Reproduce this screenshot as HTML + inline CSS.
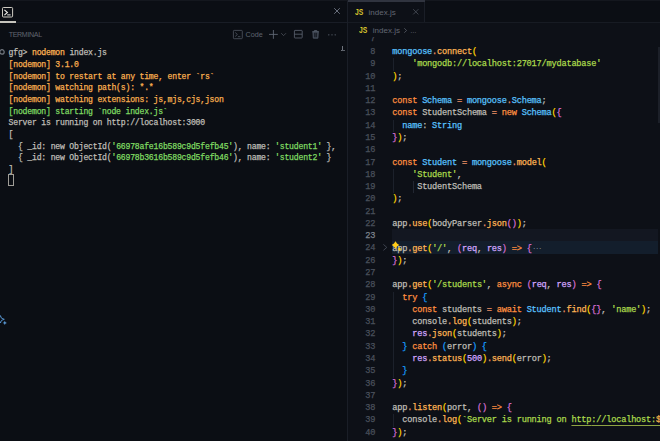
<!DOCTYPE html>
<html lang="en"><head><meta charset="utf-8"><title>index.js - Visual Studio Code</title>
<style>
html,body{margin:0;padding:0;background:#0b0e14;}
body{width:660px;height:441px;overflow:hidden;position:relative;font-family:"Liberation Sans",sans-serif;}
#app{position:absolute;left:0;top:0;width:660px;height:441px;overflow:hidden;background:#0b0e14;}
.abs{position:absolute;}
.mono{font-family:"Liberation Mono","DejaVu Sans Mono",monospace;white-space:pre;-webkit-text-stroke:0.25px currentColor;}
.tl{position:absolute;left:8.6px;height:11.65px;line-height:11.65px;font-size:8.15px;letter-spacing:-0.2008px;color:#bfbdb6;}
.el{position:absolute;left:392.3px;height:12.28px;line-height:12.28px;font-size:8.65px;letter-spacing:-0.2009px;color:#bfbdb6;}
.ln{position:absolute;left:355px;width:20.3px;text-align:right;height:12.28px;line-height:12.28px;font-size:8.65px;letter-spacing:-0.2009px;color:#4a505c;}
.ui{font-family:"Liberation Sans",sans-serif;white-space:pre;}
svg{position:absolute;overflow:visible;}
</style></head><body><div id="app">

<div class="abs" style="left:0;top:0;width:660px;height:1.2px;background:#14171e"></div>
<div class="abs" style="left:0;top:21.8px;width:347.4px;height:1.2px;background:#191d26"></div>
<div class="abs" style="left:0;top:21.3px;width:16.3px;height:1.6px;background:#c6c4bd"></div>
<!-- view icon: terminal -->
<svg style="left:2.1px;top:6.7px" width="11.1" height="10.5" viewBox="0 0 11.1 10.5"><rect x="0.5" y="0.5" width="10.1" height="9.5" rx="0.9" fill="none" stroke="#e4e1d6" stroke-width="0.9"/><path d="M2.4 2.9 L5.4 5.5 L2.4 8.1" fill="none" stroke="#eeeeea" stroke-width="1.15"/><path d="M5.2 7.9 H8.6" stroke="#eeeeea" stroke-width="1"/></svg>
<!-- close X -->
<svg style="left:334px;top:8.2px" width="6" height="6" viewBox="0 0 6 6"><path d="M0.2 0.2 L5.8 5.8 M5.8 0.2 L0.2 5.8" stroke="#7f8795" stroke-width="0.8" fill="none"/></svg>
<div class="abs ui" style="left:8.7px;top:29.6px;font-size:7.1px;line-height:10px;color:#60656f;letter-spacing:-0.35px">TERMINAL</div>
<!-- toolbar -->
<svg style="left:232.6px;top:30.2px" width="9.7" height="9.1" viewBox="0 0 9.7 9.1"><rect x="0.4" y="0.4" width="8.9" height="8.3" rx="0.8" fill="none" stroke="#515762" stroke-width="0.8"/><path d="M2.2 2.5 L4.4 4.5 L2.2 6.5" fill="none" stroke="#515762" stroke-width="0.8"/><path d="M4.9 6.7 H7.4" stroke="#515762" stroke-width="0.8"/></svg>
<div class="abs ui" style="left:245.5px;top:29.6px;font-size:7.2px;line-height:10px;color:#5d6470">Code</div>
<svg style="left:268.6px;top:30px" width="8.8" height="8.8" viewBox="0 0 8.8 8.8"><path d="M4.4 0 V8.8 M0 4.4 H8.8" stroke="#5f6673" stroke-width="0.9" fill="none"/></svg>
<svg style="left:281.4px;top:32.6px" width="5.2" height="3" viewBox="0 0 5.2 3"><path d="M0.2 0.2 L2.6 2.6 L5 0.2" stroke="#565b66" stroke-width="0.7" fill="none"/></svg>
<svg style="left:294.4px;top:30.2px" width="8.6" height="8.4" viewBox="0 0 8.6 8.4"><rect x="0.4" y="0.4" width="7.8" height="7.6" rx="0.6" fill="none" stroke="#5f6673" stroke-width="0.8"/><path d="M0.4 4.2 H8.2" stroke="#5f6673" stroke-width="0.8"/></svg>
<svg style="left:311.8px;top:30px" width="7.2" height="8.6" viewBox="0 0 7.2 8.6"><path d="M0.2 1.7 H7 M2.4 1.5 V0.5 H4.8 V1.5" stroke="#5a6270" stroke-width="0.8" fill="none"/><path d="M0.9 1.9 L1.3 8.2 H5.9 L6.3 1.9 Z" fill="#2f3540" stroke="#5a6270" stroke-width="0.7"/><path d="M2.8 3 V7 M4.4 3 V7" stroke="#0b0e14" stroke-width="0.6"/></svg>
<svg style="left:328.3px;top:33.6px" width="8" height="1.6" viewBox="0 0 8 1.6"><circle cx="0.8" cy="0.8" r="0.65" fill="#5f6673"/><circle cx="4" cy="0.8" r="0.65" fill="#5f6673"/><circle cx="7.2" cy="0.8" r="0.65" fill="#5f6673"/></svg>
<!-- small marks -->
<div class="abs" style="left:341.5px;top:46.2px;width:1px;height:3.6px;background:#8a8f98"></div>
<div class="abs" style="left:341.2px;top:49.8px;width:3.2px;height:0.9px;background:#6b7078"></div>
<!-- prompt decoration -->
<svg style="left:-1px;top:48.6px" width="6" height="6" viewBox="0 0 6 6"><circle cx="3" cy="2.9" r="2.2" fill="none" stroke="#72777f" stroke-width="1.2"/></svg>
<!-- sparkle icon on left -->
<svg style="left:0;top:310.5px" width="10" height="16" viewBox="0 310 10 16"><path d="M0.4 314.6 L1.5 317.2 L4.3 318.3 L1.5 319.4 L0.4 322 L-0.7 319.4 L-3.5 318.3 L-0.7 317.2 Z" fill="none" stroke="#5a9ad6" stroke-width="0.9"/><path d="M4.8 319.7 L5.5 321.2 L7 321.9 L5.5 322.6 L4.8 324.1 L4.1 322.6 L2.6 321.9 L4.1 321.2 Z" fill="#5a9ad6"/></svg>
<div class="tl mono" style="top:47.35px">gfg&gt; <span style="color:#ffb454">nodemon</span> index.js</div>
<div class="tl mono" style="top:59.00px"><span style="color:#f9af4f">[nodemon] 3.1.0</span></div>
<div class="tl mono" style="top:70.65px"><span style="color:#f9af4f">[nodemon] to restart at any time, enter `rs`</span></div>
<div class="tl mono" style="top:82.30px"><span style="color:#f9af4f">[nodemon] watching path(s): *.*</span></div>
<div class="tl mono" style="top:93.95px"><span style="color:#f9af4f">[nodemon] watching extensions: js,mjs,cjs,json</span></div>
<div class="tl mono" style="top:105.60px"><span style="color:#7fd962">[nodemon] starting `node index.js`</span></div>
<div class="tl mono" style="top:117.25px">Server is running on http://localhost:3000</div>
<div class="tl mono" style="top:128.90px">[</div>
<div class="tl mono" style="top:140.55px">  { _id: new ObjectId(<span style="color:#7fd962">&#x27;66978afe16b589c9d5fefb45&#x27;</span>), name: <span style="color:#7fd962">&#x27;student1&#x27;</span> },</div>
<div class="tl mono" style="top:152.20px">  { _id: new ObjectId(<span style="color:#7fd962">&#x27;66978b3616b589c9d5fefb46&#x27;</span>), name: <span style="color:#7fd962">&#x27;student2&#x27;</span> }</div>
<div class="tl mono" style="top:163.85px">]</div>
<div class="abs" style="left:7.9px;top:173.7px;width:4.5px;height:10.6px;border:0.8px solid #9f9d97;box-sizing:content-box"></div>

<div class="abs" id="right" style="left:347.4px;top:0;width:312.6px;height:441px;background:#0d1017;border-left:1px solid #1a1e27;box-sizing:border-box"></div>
<div class="abs" style="left:347.4px;top:0;width:312.6px;height:1.2px;background:#14171e"></div>
<!-- tab -->
<div class="abs" style="left:348.4px;top:0;width:76.4px;height:22.4px;background:#0d1017;border-right:1px solid #1a1e27;box-sizing:border-box"></div>
<div class="abs" style="left:347.6px;top:0;width:77.2px;height:1.8px;background:#30343f"></div>
<div class="abs" style="left:424.8px;top:1.2px;width:236px;height:20.6px;background:#0b0e14"></div>
<div class="abs" style="left:348.4px;top:21.8px;width:312px;height:1.2px;background:#171b23"></div>
<div class="abs ui" style="left:355.1px;top:7px;font-size:8.7px;line-height:10px;font-weight:bold;color:#d8c52e;transform:scaleX(0.78);transform-origin:0 0">JS</div>
<div class="abs ui" style="left:368.6px;top:6.6px;font-size:8px;line-height:12px;color:#626773">index.js</div>
<svg style="left:413px;top:9.4px" width="5.6" height="5.6" viewBox="0 0 5.6 5.6"><path d="M0.2 0.2 L5.4 5.4 M5.4 0.2 L0.2 5.4" stroke="#4b505b" stroke-width="0.8" fill="none"/></svg>
<!-- breadcrumb -->
<div class="abs ui" style="left:358.9px;top:25.4px;font-size:8.7px;line-height:10px;font-weight:bold;color:#d8c52e;transform:scaleX(0.78);transform-origin:0 0">JS</div>
<div class="abs ui" style="left:372.8px;top:24.6px;font-size:8px;line-height:12px;color:#626773">index.js</div>
<svg style="left:403.7px;top:28.4px" width="3" height="5" viewBox="0 0 3 5"><path d="M0.3 0.3 L2.6 2.5 L0.3 4.7" stroke="#5a5f6a" stroke-width="0.8" fill="none"/></svg>
<div class="abs ui" style="left:410.2px;top:24.6px;font-size:8px;line-height:12px;color:#5a5f6a;letter-spacing:-0.2px">...</div>
<div class="abs" style="left:342.4px;top:46.2px;width:1px;height:3.8px;background:#6f747d"></div>
<div class="abs" style="left:342.4px;top:49.6px;width:2.4px;height:0.8px;background:#5b6069"></div>
<div class="abs" id="ed" style="left:348.4px;top:36.8px;width:311.6px;height:404.2px;overflow:hidden">
<div class="abs" style="left:43.90px;top:192.40px;width:265.9px;height:12.28px;background:#131721"></div>
<div class="abs" style="left:43.90px;top:204.68px;width:265.9px;height:12.28px;background:#131e2c"></div>
<div class="abs" style="left:44.30px;top:21.48px;width:0.7px;height:12.28px;background:#1c212b"></div>
<div class="abs" style="left:44.30px;top:82.88px;width:0.7px;height:12.28px;background:#1c212b"></div>
<div class="abs" style="left:44.30px;top:132.00px;width:0.7px;height:24.56px;background:#1c212b"></div>
<div class="abs" style="left:64.26px;top:144.28px;width:0.7px;height:12.28px;background:#222732"></div>
<div class="abs" style="left:44.30px;top:254.80px;width:0.7px;height:85.96px;background:#1c212b"></div>
<div class="abs" style="left:44.30px;top:377.60px;width:0.7px;height:12.28px;background:#1c212b"></div>
<div class="ln mono" style="left:6.60px;top:-3.98px;color:#4a505c">7</div>
<div class="ln mono" style="left:6.60px;top:9.20px;color:#4a505c">8</div><div class="el mono" style="left:43.90px;top:9.20px"><span style="color:#59c2ff">mongoose</span><span style="color:#f29668">.</span><span style="color:#ffb454">connect</span><span style="color:#ffd700">(</span></div>
<div class="ln mono" style="left:6.60px;top:21.48px;color:#4a505c">9</div><div class="el mono" style="left:43.90px;top:21.48px">    <span style="color:#aad94c">&#x27;mongodb://localhost:27017/mydatabase&#x27;</span></div>
<div class="ln mono" style="left:6.60px;top:33.76px;color:#4a505c">10</div><div class="el mono" style="left:43.90px;top:33.76px"><span style="color:#ffd700">)</span>;</div>
<div class="ln mono" style="left:6.60px;top:46.04px;color:#4a505c">11</div>
<div class="ln mono" style="left:6.60px;top:58.32px;color:#4a505c">12</div><div class="el mono" style="left:43.90px;top:58.32px"><span style="color:#ff8f40">const </span><span style="color:#59c2ff">Schema </span><span style="color:#f29668">= </span><span style="color:#59c2ff">mongoose</span><span style="color:#f29668">.</span><span style="color:#59c2ff">Schema</span>;</div>
<div class="ln mono" style="left:6.60px;top:70.60px;color:#4a505c">13</div><div class="el mono" style="left:43.90px;top:70.60px"><span style="color:#ff8f40">const </span>StudentSchema <span style="color:#f29668">= </span><span style="color:#ff8f40">new </span><span style="color:#59c2ff">Schema</span><span style="color:#ffd700">(</span><span style="color:#da70d6">{</span></div>
<div class="ln mono" style="left:6.60px;top:82.88px;color:#4a505c">14</div><div class="el mono" style="left:43.90px;top:82.88px">  <span style="color:#59c2ff">name</span>: <span style="color:#59c2ff">String</span></div>
<div class="ln mono" style="left:6.60px;top:95.16px;color:#4a505c">15</div><div class="el mono" style="left:43.90px;top:95.16px"><span style="color:#da70d6">}</span><span style="color:#ffd700">)</span>;</div>
<div class="ln mono" style="left:6.60px;top:107.44px;color:#4a505c">16</div>
<div class="ln mono" style="left:6.60px;top:119.72px;color:#4a505c">17</div><div class="el mono" style="left:43.90px;top:119.72px"><span style="color:#ff8f40">const </span><span style="color:#59c2ff">Student </span><span style="color:#f29668">= </span><span style="color:#59c2ff">mongoose</span><span style="color:#f29668">.</span><span style="color:#ffb454">model</span><span style="color:#ffd700">(</span></div>
<div class="ln mono" style="left:6.60px;top:132.00px;color:#4a505c">18</div><div class="el mono" style="left:43.90px;top:132.00px">    <span style="color:#aad94c">&#x27;Student&#x27;</span>,</div>
<div class="ln mono" style="left:6.60px;top:144.28px;color:#4a505c">19</div><div class="el mono" style="left:43.90px;top:144.28px">     StudentSchema</div>
<div class="ln mono" style="left:6.60px;top:156.56px;color:#4a505c">20</div><div class="el mono" style="left:43.90px;top:156.56px"><span style="color:#ffd700">)</span>;</div>
<div class="ln mono" style="left:6.60px;top:168.84px;color:#4a505c">21</div>
<div class="ln mono" style="left:6.60px;top:181.12px;color:#4a505c">22</div><div class="el mono" style="left:43.90px;top:181.12px">app<span style="color:#f29668">.</span><span style="color:#ffb454">use</span><span style="color:#ffd700">(</span>bodyParser<span style="color:#f29668">.</span><span style="color:#ffb454">json</span><span style="color:#da70d6">()</span><span style="color:#ffd700">)</span>;</div>
<div class="ln mono" style="left:6.60px;top:193.40px;color:#7e838d">23</div>
<div class="ln mono" style="left:6.60px;top:205.68px;color:#4a505c">24</div><div class="el mono" style="left:43.90px;top:205.68px">app<span style="color:#f29668">.</span><span style="color:#ffb454">get</span><span style="color:#ffd700">(</span><span style="color:#aad94c">&#x27;/&#x27;</span>, <span style="color:#da70d6">(</span><span style="color:#d2a6ff">req</span>, <span style="color:#d2a6ff">res</span><span style="color:#da70d6">)</span><span style="color:#ff8f40"> =&gt; </span><span style="color:#da70d6">{</span><span style="color:#7a808c;font-family:'DejaVu Sans',sans-serif;-webkit-text-stroke:0;margin-left:1px">⋯</span></div>
<div class="ln mono" style="left:6.60px;top:217.96px;color:#4a505c">26</div><div class="el mono" style="left:43.90px;top:217.96px"><span style="color:#da70d6">}</span><span style="color:#ffd700">)</span>;</div>
<div class="ln mono" style="left:6.60px;top:230.24px;color:#4a505c">27</div>
<div class="ln mono" style="left:6.60px;top:242.52px;color:#4a505c">28</div><div class="el mono" style="left:43.90px;top:242.52px">app<span style="color:#f29668">.</span><span style="color:#ffb454">get</span><span style="color:#ffd700">(</span><span style="color:#aad94c">&#x27;/students&#x27;</span>, <span style="color:#ff8f40">async </span><span style="color:#da70d6">(</span><span style="color:#d2a6ff">req</span>, <span style="color:#d2a6ff">res</span><span style="color:#da70d6">)</span><span style="color:#ff8f40"> =&gt; </span><span style="color:#da70d6">{</span></div>
<div class="ln mono" style="left:6.60px;top:254.80px;color:#4a505c">29</div><div class="el mono" style="left:43.90px;top:254.80px">  <span style="color:#ff8f40">try </span><span style="color:#179fff">{</span></div>
<div class="ln mono" style="left:6.60px;top:267.08px;color:#4a505c">30</div><div class="el mono" style="left:43.90px;top:267.08px">    <span style="color:#ff8f40">const </span>students <span style="color:#f29668">= </span><span style="color:#ff8f40">await </span><span style="color:#59c2ff">Student</span><span style="color:#f29668">.</span><span style="color:#ffb454">find</span><span style="color:#ffd700">(</span><span style="color:#da70d6">{}</span>, <span style="color:#aad94c">&#x27;name&#x27;</span><span style="color:#ffd700">)</span>;</div>
<div class="ln mono" style="left:6.60px;top:279.36px;color:#4a505c">31</div><div class="el mono" style="left:43.90px;top:279.36px">    console<span style="color:#f29668">.</span><span style="color:#ffb454">log</span><span style="color:#ffd700">(</span>students<span style="color:#ffd700">)</span>;</div>
<div class="ln mono" style="left:6.60px;top:291.64px;color:#4a505c">32</div><div class="el mono" style="left:43.90px;top:291.64px">    <span style="color:#d2a6ff">res</span><span style="color:#f29668">.</span><span style="color:#ffb454">json</span><span style="color:#ffd700">(</span>students<span style="color:#ffd700">)</span>;</div>
<div class="ln mono" style="left:6.60px;top:303.92px;color:#4a505c">33</div><div class="el mono" style="left:43.90px;top:303.92px">  <span style="color:#179fff">} </span><span style="color:#ff8f40">catch </span><span style="color:#179fff">(</span>error<span style="color:#179fff">) {</span></div>
<div class="ln mono" style="left:6.60px;top:316.20px;color:#4a505c">34</div><div class="el mono" style="left:43.90px;top:316.20px">    <span style="color:#d2a6ff">res</span><span style="color:#f29668">.</span><span style="color:#ffb454">status</span><span style="color:#ffd700">(</span><span style="color:#d2a6ff">500</span><span style="color:#ffd700">)</span><span style="color:#f29668">.</span><span style="color:#ffb454">send</span><span style="color:#ffd700">(</span>error<span style="color:#ffd700">)</span>;</div>
<div class="ln mono" style="left:6.60px;top:328.48px;color:#4a505c">35</div><div class="el mono" style="left:43.90px;top:328.48px">  <span style="color:#179fff">}</span></div>
<div class="ln mono" style="left:6.60px;top:340.76px;color:#4a505c">36</div><div class="el mono" style="left:43.90px;top:340.76px"><span style="color:#da70d6">}</span><span style="color:#ffd700">)</span>;</div>
<div class="ln mono" style="left:6.60px;top:353.04px;color:#4a505c">37</div>
<div class="ln mono" style="left:6.60px;top:365.32px;color:#4a505c">38</div><div class="el mono" style="left:43.90px;top:365.32px">app<span style="color:#f29668">.</span><span style="color:#ffb454">listen</span><span style="color:#ffd700">(</span>port, <span style="color:#da70d6">()</span><span style="color:#ff8f40"> =&gt; </span><span style="color:#da70d6">{</span></div>
<div class="ln mono" style="left:6.60px;top:377.60px;color:#4a505c">39</div><div class="el mono" style="left:43.90px;top:377.60px">  console<span style="color:#f29668">.</span><span style="color:#ffb454">log</span><span style="color:#ffd700">(</span><span style="color:#aad94c">`Server is running on </span><span style="color:#aad94c;text-decoration:underline;text-underline-offset:2.8px;text-decoration-thickness:1px;text-decoration-color:#8ea443">http</span><span style="color:#aad94c;text-decoration:underline;text-underline-offset:2.8px;text-decoration-thickness:1px;text-decoration-color:#8ea443">://localhost:</span><span style="color:#f5b04a;text-decoration:underline;text-underline-offset:2.8px;text-decoration-thickness:1px;text-decoration-color:#8ea443">${</span></div>
<div class="ln mono" style="left:6.60px;top:389.88px;color:#4a505c">40</div><div class="el mono" style="left:43.90px;top:389.88px"><span style="color:#da70d6">}</span><span style="color:#ffd700">)</span>;</div>
<svg style="left:34.40px;top:206.88px" width="4.4" height="6.8" viewBox="0 0 4.4 6.8"><path d="M0.4 0.4 L3.8 3.4 L0.4 6.4" stroke="#4a515d" stroke-width="0.8" fill="none"/></svg>
<svg style="left:0;top:0" width="20" height="20" viewBox="0 0 20 20"><g transform="translate(-348.40,-36.80)"><path d="M395.90 241.00 L397.42 243.28 L399.70 244.80 L397.42 246.32 L395.90 248.60 L394.38 246.32 L392.10 244.80 L394.38 243.28 Z" fill="#ffcc1a"/><path d="M399.90 246.90 L400.74 248.06 L401.90 248.90 L400.74 249.74 L399.90 250.90 L399.06 249.74 L397.90 248.90 L399.06 248.06 Z" fill="#ffcc1a"/></g></svg>
</div>
<div class="abs" style="left:658px;top:47px;width:2px;height:76px;background:#1c2029"></div>
</div></body></html>
